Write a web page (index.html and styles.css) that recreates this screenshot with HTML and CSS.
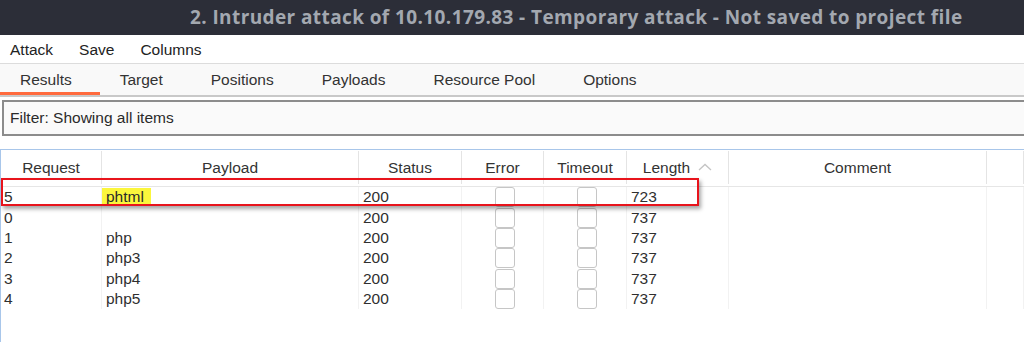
FILE: index.html
```html
<!DOCTYPE html>
<html>
<head>
<meta charset="utf-8">
<link rel="stylesheet" href="styles.css">
</head>
<body>
<div class="window">
  <div class="titlebar">2. Intruder attack of 10.10.179.83 - Temporary attack - Not saved to project file</div>
  <div class="menubar">
    <span class="menu">Attack</span>
    <span class="menu">Save</span>
    <span class="menu">Columns</span>
  </div>
  <div class="tabs">
    <span class="tab active">Results</span>
    <span class="tab">Target</span>
    <span class="tab">Positions</span>
    <span class="tab">Payloads</span>
    <span class="tab">Resource Pool</span>
    <span class="tab">Options</span>
  </div>
  <div class="filter-wrap">
    <div class="filter">Filter: Showing all items</div>
  </div>
  <div class="table">
    <div class="row head">
      <div class="c">Request</div>
      <div class="c">Payload</div>
      <div class="c">Status</div>
      <div class="c">Error</div>
      <div class="c">Timeout</div>
      <div class="c sort">Length <svg class="arrow" width="14" height="8" viewBox="0 0 14 8"><polyline points="1,7 7,1.5 13,7" fill="none" stroke="#c4c4c4" stroke-width="1.3"/></svg></div>
      <div class="c">Comment</div>
      <div class="c"></div>
    </div>
    <div class="body">
      <div class="row">
        <div class="c l">5</div><div class="c l"><span class="hl">phtml</span></div><div class="c l">200</div>
        <div class="c cb"><span class="box"></span></div><div class="c cb"><span class="box"></span></div>
        <div class="c l">723</div><div class="c"></div><div class="c"></div>
      </div>
      <div class="row">
        <div class="c l">0</div><div class="c l"></div><div class="c l">200</div>
        <div class="c cb"><span class="box"></span></div><div class="c cb"><span class="box"></span></div>
        <div class="c l">737</div><div class="c"></div><div class="c"></div>
      </div>
      <div class="row">
        <div class="c l">1</div><div class="c l">php</div><div class="c l">200</div>
        <div class="c cb"><span class="box"></span></div><div class="c cb"><span class="box"></span></div>
        <div class="c l">737</div><div class="c"></div><div class="c"></div>
      </div>
      <div class="row">
        <div class="c l">2</div><div class="c l">php3</div><div class="c l">200</div>
        <div class="c cb"><span class="box"></span></div><div class="c cb"><span class="box"></span></div>
        <div class="c l">737</div><div class="c"></div><div class="c"></div>
      </div>
      <div class="row">
        <div class="c l">3</div><div class="c l">php4</div><div class="c l">200</div>
        <div class="c cb"><span class="box"></span></div><div class="c cb"><span class="box"></span></div>
        <div class="c l">737</div><div class="c"></div><div class="c"></div>
      </div>
      <div class="row">
        <div class="c l">4</div><div class="c l">php5</div><div class="c l">200</div>
        <div class="c cb"><span class="box"></span></div><div class="c cb"><span class="box"></span></div>
        <div class="c l">737</div><div class="c"></div><div class="c"></div>
      </div>
    </div>
    <div class="annot"></div>
  </div>
</div>
</body>
</html>
```

FILE: styles.css
```css
html, body {
  margin: 0;
  padding: 0;
  background: #ffffff;
}
.window {
  width: 1024px;
  height: 342px;
  overflow: hidden;
  font-family: "Liberation Sans", Arial, sans-serif;
  font-size: 15.5px;
  color: #2f2f2f;
}
.titlebar {
  height: 35px;
  line-height: 35px;
  background: #2c2e38;
  color: #a3a8b0;
  font-family: "Open Sans", "DejaVu Sans", sans-serif;
  font-weight: 700;
  font-size: 19px;
  padding-left: 190px;
  white-space: nowrap;
  letter-spacing: 0.4px;
}
.menubar {
  height: 29px;
  display: flex;
  align-items: center;
  padding: 2px 0 0 10px;
  box-sizing: border-box;
  gap: 26px;
  border-bottom: 1px solid #dcdcdc;
  background: #ffffff;
  color: #222;
}
.tabs {
  height: 31px;
  display: flex;
  align-items: stretch;
  background: #f9f9f9;
  border-bottom: 2px solid #c9c9c9;
}
.tab {
  display: flex;
  align-items: center;
  padding: 3px 28px 0 20px;
  border-bottom: 3px solid transparent;
  color: #333;
}
.tab.active {
  border-bottom-color: #ff6a3d;
}
.filter-wrap {
  padding: 3px 0 0 2px;
  height: 52px;
  box-sizing: border-box;
  background: #ffffff;
}
.filter {
  height: 32px;
  border: 2px solid #8c8c8c;
  border-right: none;
  background: #fafafa;
  display: flex;
  align-items: center;
  padding-left: 6px;
  color: #2a2a2a;
}
.table {
  position: relative;
  border-top: 1px solid #a8c6ea;
  border-left: 1px solid #a8c6ea;
  height: 200px;
}
.row {
  display: grid;
  grid-template-columns: 101px 257px 103px 82px 83px 102px 258px 1fr;
  height: 20.4px;
}
.row.head {
  height: 36px;
  border-bottom: 1px solid #e6e6e6;
}
.head .c {
  display: flex;
  align-items: center;
  justify-content: center;
  border-right: 1px solid #e4e4e4;
  margin: 1px 0 2px;
  color: #333;
}
.arrow {
  margin-left: 8px;
  margin-top: -2px;
}
.body .c {
  border-right: 1px solid #f2f2f2;
  display: flex;
  align-items: center;
  white-space: nowrap;
}
.body .c.l {
  padding-left: 3px;
}
.body .row .c:nth-child(2),
.body .row .c:nth-child(3),
.body .row .c:nth-child(6) {
  padding-left: 4px;
}
.hl {
  background: #fbf63c;
  margin-left: -4px;
  padding: 0 7px 0 4px;
  line-height: 18px;
  color: #2a2a2a;
}
.body .c.cb {
  justify-content: center;
}
.box {
  display: block;
  width: 18px;
  height: 18px;
  border: 1px solid #c6c6c6;
  border-radius: 3px;
  background: #ffffff;
  margin-left: 4px;
}
.annot {
  position: absolute;
  left: 0;
  top: 28px;
  width: 694px;
  height: 24px;
  border: 2px solid #e8141c;
  box-shadow: 2px 3px 4px rgba(0, 0, 0, 0.35);
  pointer-events: none;
}
```
